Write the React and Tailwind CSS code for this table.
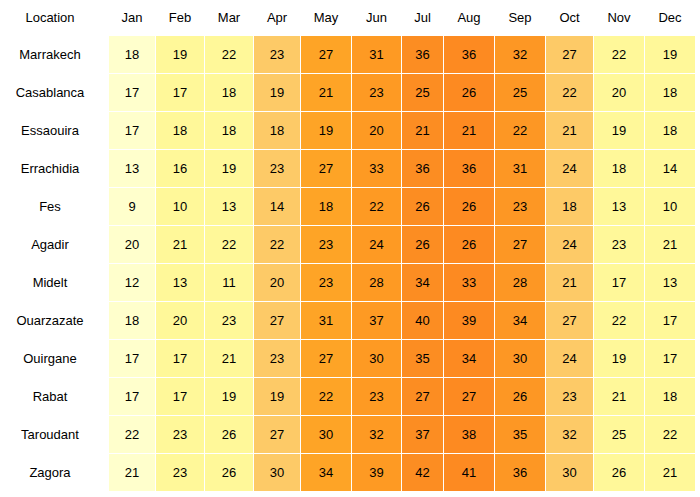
import { Fragment } from 'react';

const MONTHS = ['Jan', 'Feb', 'Mar', 'Apr', 'May', 'Jun', 'Jul', 'Aug', 'Sep', 'Oct', 'Nov', 'Dec'];

// background per month column
const COLS = [
  'bg-[#ffffcc]',
  'bg-[#fff899]',
  'bg-[#fff899]',
  'bg-[#fdca67]',
  'bg-[#fea426]',
  'bg-[#fe9a23]',
  'bg-[#fc8d22]',
  'bg-[#fd8a21]',
  'bg-[#fd9724]',
  'bg-[#fdca67]',
  'bg-[#fff899]',
  'bg-[#fff899]',
];

const ROWS = [
  ['Marrakech', 18, 19, 22, 23, 27, 31, 36, 36, 32, 27, 22, 19],
  ['Casablanca', 17, 17, 18, 19, 21, 23, 25, 26, 25, 22, 20, 18],
  ['Essaouira', 17, 18, 18, 18, 19, 20, 21, 21, 22, 21, 19, 18],
  ['Errachidia', 13, 16, 19, 23, 27, 33, 36, 36, 31, 24, 18, 14],
  ['Fes', 9, 10, 13, 14, 18, 22, 26, 26, 23, 18, 13, 10],
  ['Agadir', 20, 21, 22, 22, 23, 24, 26, 26, 27, 24, 23, 21],
  ['Midelt', 12, 13, 11, 20, 23, 28, 34, 33, 28, 21, 17, 13],
  ['Ouarzazate', 18, 20, 23, 27, 31, 37, 40, 39, 34, 27, 22, 17],
  ['Ouirgane', 17, 17, 21, 23, 27, 30, 35, 34, 30, 24, 19, 17],
  ['Rabat', 17, 17, 19, 19, 22, 23, 27, 27, 26, 23, 21, 18],
  ['Taroudant', 22, 23, 26, 27, 30, 32, 37, 38, 35, 32, 25, 22],
  ['Zagora', 21, 23, 26, 30, 34, 39, 42, 41, 36, 30, 26, 21],
];

export default function App() {
  return (
    <div className="w-[700px] h-[497px] bg-white font-['Liberation_Sans',Arial,sans-serif] text-[13px] text-black">
      <div className="grid grid-cols-[108px_46px_48px_48px_46px_50px_49px_41px_50px_50px_47px_50px_50px] gap-px bg-white">
        {/* Header */}
        <div className="h-[35px] flex items-center justify-center pr-2">Location</div>
        {MONTHS.map((m) => (
          <div key={m} className="h-[35px] flex items-center justify-center">{m}</div>
        ))}

        {/* Rows */}
        {ROWS.map(([name, ...vals]) => (
          <Fragment key={name}>
            <div className="h-[37px] flex items-center justify-center pr-2">{name}</div>
            {vals.map((v, i) => (
              <div key={i} className={`h-[37px] flex items-center justify-center ${COLS[i]}`}>{v}</div>
            ))}
          </Fragment>
        ))}
      </div>
    </div>
  );
}
